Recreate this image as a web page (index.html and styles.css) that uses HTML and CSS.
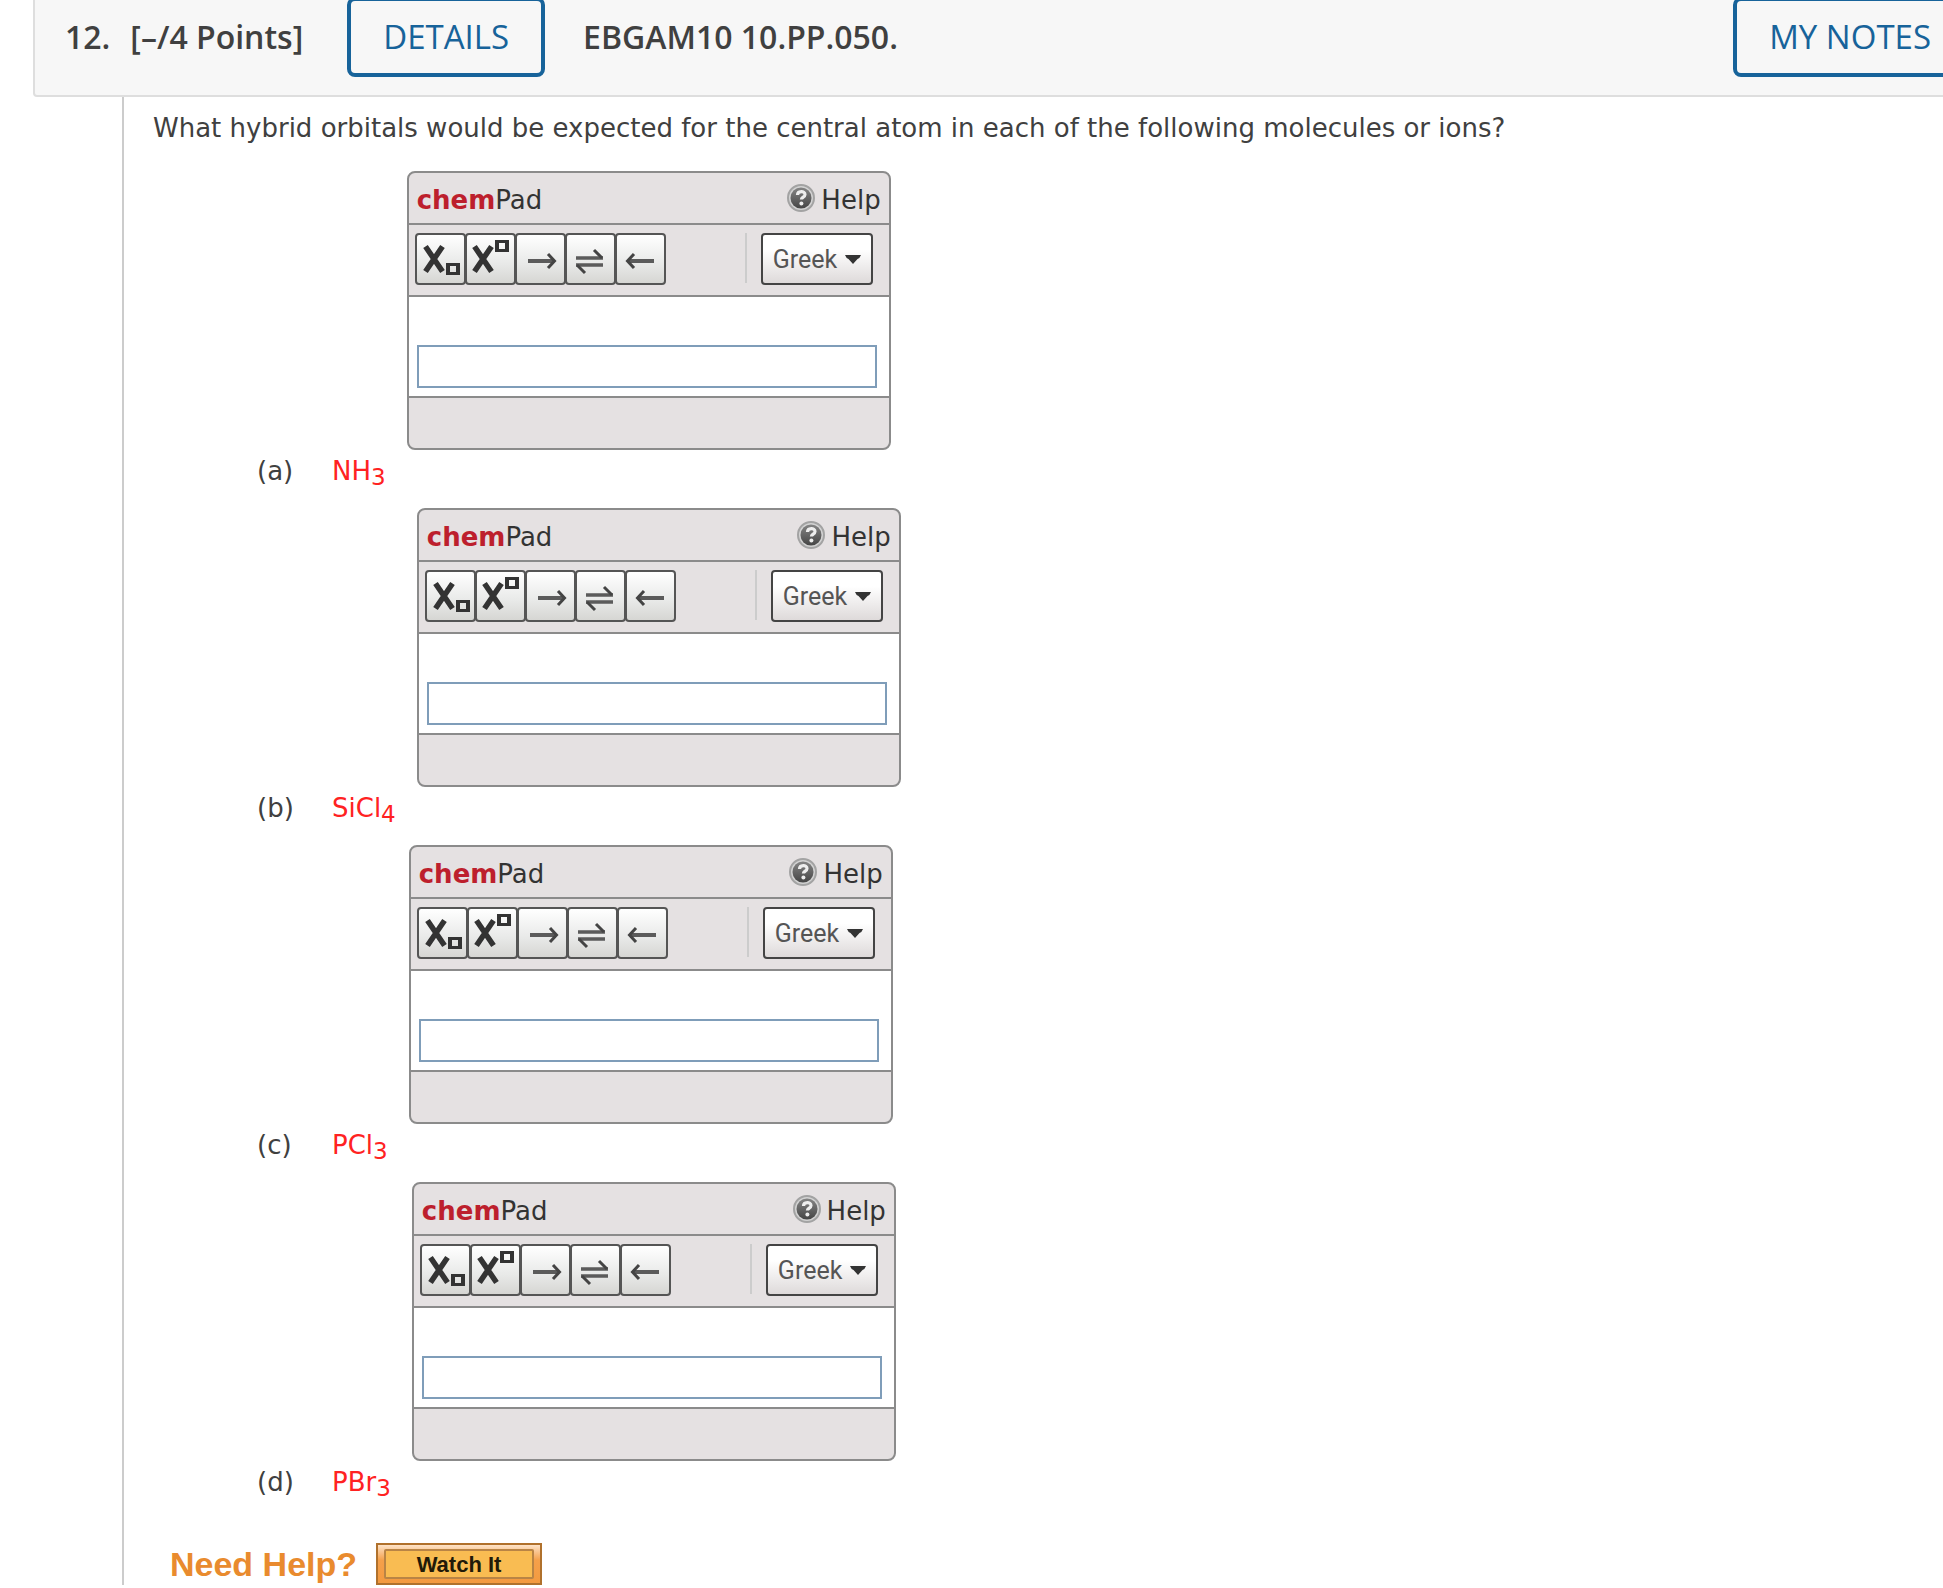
FILE: index.html
```html
<!DOCTYPE html>
<html lang="en">
<head>
  <meta charset="utf-8">
  <title>Question 12</title>
  <link rel="stylesheet" href="styles.css">
</head>
<body>
  <header class="question-header">
    <span class="number">12.</span>
    <span class="points">[–/4 Points]</span>
    <button type="button" class="header-button">DETAILS</button>
    <span class="code">EBGAM10 10.PP.050.</span>
    <button type="button" class="header-button notes">MY NOTES</button>
  </header>

  <main class="question">
    <p class="prompt">What hybrid orbitals would be expected for the central atom in each of the following molecules or ions?</p>

    <div id="parts" class="parts"></div>

    <div class="need-help">
      <span class="need-help-title">Need Help?</span>
      <button type="button" class="watch-it"><span>Watch It</span></button>
    </div>
  </main>

  <template id="partTemplate">
    <section class="part">
      <label class="part-label"><span class="letter"></span><span class="formula"><span class="atoms"></span><sub></sub></span></label>
      <div class="pad">
        <div class="pad-title">
          <span><b>chem</b>Pad</span>
          <a href="#help" class="help">
            <svg width="28" height="28" viewBox="0 0 28 28">
              <circle cx="14" cy="14" r="13" fill="#d2d2d2" stroke="#a3a3a3" stroke-width="2"/>
              <circle cx="14" cy="14" r="10.5" fill="url(#helpFill)"/>
              <path d="M10.5 11c0-4.500 7.500-4.500 7.500-.6 0 2.700-3.600 2.700-3.600 5.200" fill="none" stroke="#eee" stroke-width="3.200"/>
              <circle cx="14.400" cy="19.600" r="2" fill="#eee"/>
            </svg>
            Help
          </a>
        </div>
        <div class="pad-tools">
          <div class="tool-group">
            <button type="button" class="tool" aria-label="Subscript">
              <svg viewBox="0 0 47 48"><path d="M8.500 11.500l17 25M25.500 11.500l-17 25" stroke="#333" stroke-width="5.500" fill="none"/><path d="M29 28h14v12H29zm4 3v6h6v-6z" fill="#333" fill-rule="evenodd"/></svg>
            </button>
            <button type="button" class="tool" aria-label="Superscript">
              <svg viewBox="0 0 47 48"><path d="M7.500 11.500l17 25M24.500 11.500l-17 25" stroke="#333" stroke-width="5.500" fill="none"/><path d="M28 5h14v12H28zm4 3v6h6V8z" fill="#333" fill-rule="evenodd"/></svg>
            </button>
            <button type="button" class="tool" aria-label="Right arrow">
              <svg viewBox="0 0 47 48"><path d="M11 26h25" stroke="#5b5b5b" stroke-width="4"/><path d="M31 19l6.500 7-6.500 7" fill="none" stroke="#444" stroke-width="3"/></svg>
            </button>
            <button type="button" class="tool" aria-label="Equilibrium arrows">
              <svg viewBox="0 0 47 48"><path d="M9 23h27M9 30h27" stroke="#5b5b5b" stroke-width="3.500"/><path d="M27 15l8 8M10 30l8 8" fill="none" stroke="#444" stroke-width="3"/></svg>
            </button>
            <button type="button" class="tool" aria-label="Left arrow">
              <svg viewBox="0 0 47 48"><path d="M11 26h26" stroke="#5b5b5b" stroke-width="4"/><path d="M17 19l-6.500 7 6.500 7" fill="none" stroke="#444" stroke-width="3"/></svg>
            </button>
          </div>
          <div class="greek">
            <select aria-label="Greek letters"><option>Greek</option></select>
            <svg class="caret" width="16" height="9" viewBox="0 0 16 9"><path d="M0 0h16q-1 3-3.500 4L8 9 3.500 4Q1 3 0 0z" fill="#333"/></svg>
          </div>
        </div>
        <div class="pad-entry"><input type="text"></div>
        <div class="pad-footer"></div>
      </div>
    </section>
  </template>

  <svg class="defs" width="0" height="0">
    <linearGradient id="helpFill" x1="0" y1="0" x2="0" y2="1">
      <stop offset="0" stop-color="#858585"/>
      <stop offset="1" stop-color="#454545"/>
    </linearGradient>
  </svg>

  <script>
    var parts = [
      ['a', 'NH', 3],
      ['b', 'SiCl', 4],
      ['c', 'PCl', 3],
      ['d', 'PBr', 3]
    ];
    var template = document.getElementById('partTemplate');
    parts.forEach(function (part) {
      var node = template.content.cloneNode(true);
      node.querySelector('.letter').textContent = '(' + part[0] + ')';
      node.querySelector('.atoms').textContent = part[1];
      node.querySelector('sub').textContent = part[2];
      node.querySelector('input').id = 'answer-' + part[0];
      node.querySelector('label').htmlFor = 'answer-' + part[0];
      document.getElementById('parts').appendChild(node);
    });
  </script>
</body>
</html>
```

FILE: styles.css
```css
* {
  box-sizing: border-box;
}

body {
  margin: 0;
  overflow: hidden;
  color: #404040;
  background: #fff;
  font-family: Verdana, "DejaVu Sans", sans-serif;
  font-size: 26px;
}

button,
input,
select {
  margin: 0;
  padding: 0;
  font: inherit;
}

/* header */
.question-header {
  display: flex;
  align-items: flex-start;
  height: 100px;
  margin: -3px -34px 0 33px;
  padding: 0 8px 0 30px;
  background: #f7f7f7;
  border: 2px solid #dedede;
  border-top: 0;
  border-radius: 0 0 4px 4px;
  font-family: "Open Sans", sans-serif;
  font-size: 32px;
  font-weight: 600;
  line-height: 80px;
  white-space: nowrap;
}

.points {
  margin: 0 44px 0 20px;
}

.header-button {
  height: 80px;
  padding: 0 32px;
  color: #17639a;
  background: transparent;
  border: 4px solid #17639a;
  border-radius: 8px;
  font-size: 33px;
  font-weight: 500;
  line-height: 72px;
}

.code {
  margin-left: 38px;
}

.notes {
  margin-left: auto;
}

/* question body */
.question {
  margin-left: 122px;
  padding-left: 29px;
  border-left: 2px solid #ccc;
}

.prompt {
  margin: 0;
  padding: 16px 0 27px;
  line-height: 31px;
}

.parts {
  display: flex;
  flex-direction: column;
  gap: 16px;
  padding-left: 104px;
}

.part {
  display: flex;
  align-items: flex-end;
}

.part-label {
  display: flex;
  line-height: 42px;
}

.letter {
  width: 75px;
}

.formula {
  margin-right: 21px;
  color: #f22;
}

.formula sub {
  font-size: 23px;
  line-height: 0;
  vertical-align: -5px;
}

/* chemPad */
.pad {
  width: 484px;
  margin-bottom: 42px;
  overflow: hidden;
  background: #e5e1e2;
  border: 2px solid #8b8b8b;
  border-radius: 8px;
}

.pad-title {
  display: flex;
  justify-content: space-between;
  align-items: center;
  height: 50px;
  padding: 3px 8px 0;
  color: #333;
}

.pad-title b {
  color: #bd1f2d;
}

.help {
  display: flex;
  align-items: center;
  gap: 6px;
  color: inherit;
  text-decoration: none;
}

.help svg {
  margin-bottom: 4px;
}

.pad-tools {
  display: flex;
  justify-content: space-between;
  height: 74px;
  padding: 8px 16px 0 6px;
  border-top: 2px solid #8b8b8b;
  border-bottom: 2px solid #8b8b8b;
}

.tool-group {
  display: flex;
}

.tool {
  width: 51px;
  height: 52px;
  background: linear-gradient(#fff, #e8e9e8 60%, #d6d6d3);
  border: 2px solid #555;
  border-radius: 4px;
}

.tool + .tool {
  margin-left: -1px;
}

.tool svg {
  display: block;
  width: 100%;
}

.greek {
  position: relative;
  height: 50px;
  padding-left: 14px;
  border-left: 2px solid #ccc;
}

.greek select {
  width: 112px;
  height: 52px;
  padding: 0 10px;
  color: #555;
  background: linear-gradient(#fff 30%, #dedada);
  border: 2px solid #444;
  border-radius: 4px;
  appearance: none;
  font-family: Roboto, sans-serif;
  font-size: 25px;
}

.caret {
  position: absolute;
  top: 22px;
  right: 12px;
}

.pad-entry {
  height: 99px;
  padding: 48px 12px 0 8px;
  background: #fff;
}

.pad-entry input {
  display: block;
  width: 100%;
  height: 43px;
  padding: 0 6px;
  background: #fff;
  border: 2px solid #7f9db9;
}

.pad-footer {
  height: 52px;
  border-top: 2px solid #8b8b8b;
}

/* need help */
.need-help {
  display: flex;
  align-items: center;
  gap: 19px;
  margin-top: 40px;
  padding-left: 17px;
  font-family: "Liberation Sans", Arial, sans-serif;
  font-weight: bold;
}

.need-help-title {
  color: #e98b2e;
  font-size: 34px;
}

.watch-it {
  width: 166px;
  height: 42px;
  padding: 4px 6px;
  color: #221a08;
  background: linear-gradient(#fde3c8, #f5a04a 40%, #f39a40);
  border: 2px solid #b0712c;
  font-size: 22px;
}

.watch-it span {
  display: block;
  height: 30px;
  background: #f9bc52;
  border: 2px solid #b98445;
  border-radius: 2px;
  line-height: 28px;
}
```
